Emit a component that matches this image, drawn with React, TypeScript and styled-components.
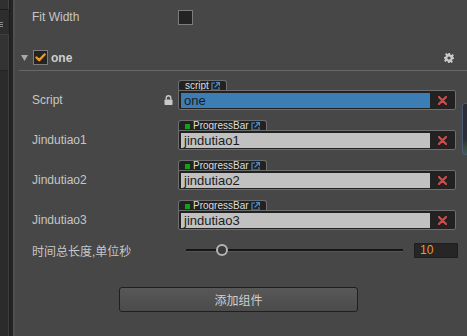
import styled, { createGlobalStyle } from "styled-components";

const GlobalStyle = createGlobalStyle`
  html, body {
    margin: 0;
    padding: 0;
    background: #474747;
  }
  body {
    font-family: "Liberation Sans", Arial, "Noto Sans CJK SC", sans-serif;
    -webkit-font-smoothing: antialiased;
  }
  #root {
    height: 336px;
  }
`;

type Ref = { label: string; type: string; value: string; locked?: boolean; script?: boolean };

const refs: Ref[] = [
  { label: "Script", type: "script", value: "one", locked: true, script: true },
  { label: "Jindutiao1", type: "ProgressBar", value: "jindutiao1" },
  { label: "Jindutiao2", type: "ProgressBar", value: "jindutiao2" },
  { label: "Jindutiao3", type: "ProgressBar", value: "jindutiao3" },
];

const CheckMark = () => (
  <svg width="11" height="9" viewBox="0 0 11 9">
    <path d="M1.5 4.5 L4.2 7.2 L9.5 1.5" fill="none" stroke="#f39a1e" strokeWidth="2.4" strokeLinecap="round" strokeLinejoin="round" />
  </svg>
);

const FoldArrow = () => (
  <svg width="7" height="6" viewBox="0 0 7 6">
    <path d="M0 0 H7 L3.5 6 Z" fill="#a9a9a9" />
  </svg>
);

const Gear = () => (
  <svg width="10" height="10" viewBox="0 0 10 10">
    <path
      fill="#c9c9c9"
      fillRule="evenodd"
      d="M4 0h2l.3 1.5 1.1.5 1.3-.9 1.2 1.2-.9 1.3.5 1.1L10 4v2l-1.5.3-.5 1.1.9 1.3-1.2 1.2-1.3-.9-1.1.5L6 10H4l-.3-1.5-1.1-.5-1.3.9-1.2-1.2.9-1.3-.5-1.1L0 6V4l1.5-.3.5-1.1-.9-1.3 1.2-1.2 1.3.9 1.1-.5zM5 3.4a1.6 1.6 0 1 0 0 3.2 1.6 1.6 0 1 0 0-3.2z"
    />
  </svg>
);

const Lock = () => (
  <svg width="9" height="10" viewBox="0 0 9 10">
    <path d="M2.2 4.5V3a2.3 2.3 0 0 1 4.6 0v1.5" fill="none" stroke="#c9c9c9" strokeWidth="1.4" />
    <rect x="0.5" y="4.5" width="8" height="5.5" rx="0.8" fill="#c9c9c9" />
  </svg>
);

const LinkIcon = () => (
  <svg width="9" height="9" viewBox="0 0 9 9">
    <path d="M4 1H1v7h7V5" fill="none" stroke="#4a8fd4" strokeWidth="1.1" />
    <path d="M5 0.6h3.4V4" fill="none" stroke="#4a8fd4" strokeWidth="1.1" />
    <path d="M8.2 0.8 3.6 5.4" stroke="#4a8fd4" strokeWidth="1.3" />
  </svg>
);

const RemoveIcon = () => (
  <svg width="9" height="9" viewBox="0 0 9 9">
    <path d="M1 1 8 8M8 1 1 8" stroke="#d5494b" strokeWidth="2.3" strokeLinecap="round" />
  </svg>
);

export default function App() {
  return (
    <>
      <GlobalStyle />
      <Page>
        <Dock>
          <DockPanel>
            <DockTopBox />
            <DockGlyph />
            <DockList>
              <DockHeader />
            </DockList>
          </DockPanel>
          <DockGutter />
          <DockEdge />
        </Dock>

        <Inspector>
          <PropRow $height={34}>
            <PropLabel>Fit Width</PropLabel>
            <CheckBox />
          </PropRow>

          <CompHeader>
            <FoldArrow />
            <CheckBox $small>
              <CheckMark />
            </CheckBox>
            <CompName>one</CompName>
            <GearSlot>
              <Gear />
            </GearSlot>
          </CompHeader>

          <RefList>
            {refs.map((r) => (
              <RefRow key={r.label}>
                <RefLabel>
                  {r.label}
                  {r.locked && (
                    <LockSlot>
                      <Lock />
                    </LockSlot>
                  )}
                </RefLabel>
                <RefField>
                  <TypeTab>
                    {!r.script && <TypeDot />}
                    {r.type}
                    <LinkIcon />
                  </TypeTab>
                  <FieldBox>
                    <FieldValue $script={r.script}>{r.value}</FieldValue>
                    <RemoveSlot>
                      <RemoveIcon />
                    </RemoveSlot>
                  </FieldBox>
                </RefField>
              </RefRow>
            ))}
          </RefList>

          <SliderRow>
            <PropLabel>时间总长度,单位秒</PropLabel>
            <SliderTrack>
              <SliderThumb style={{ left: `${(10 / 60) * 100}%` }} />
            </SliderTrack>
            <NumberBox>10</NumberBox>
          </SliderRow>

          <AddButton>添加组件</AddButton>

          <FloatEdge />
        </Inspector>
      </Page>
    </>
  );
}

const Page = styled.div`
display: flex;
width: 467px;
height: 336px;
overflow: hidden;
background: #474747;
`

const Dock = styled.div`
display: flex;
flex: none;
width: 15px;
height: 100%;
`
const DockPanel = styled.div`
display: flex;
flex-direction: column;
width: 9px;
background: #2d2d2d;
border-right: 1px solid #1d1d1d;
`
const DockTopBox = styled.div`
height: 9px;
background: #303030;
border-bottom: 1px solid #1b1b1b;
border-right: 1px solid #444;
`
const DockGlyph = styled.div`
width: 3px;
height: 5px;
margin-top: 12px;
background: repeating-linear-gradient(#8a8a8a 0 1px, transparent 1px 2px);
`
const DockList = styled.div`
flex: 1;
margin-top: 7px;
background: #2b2b2b;
border-top: 1px solid #3e3e3e;
border-right: 1px solid #3f3f3f;
`
const DockHeader = styled.div`
height: 35px;
background: #333;
border-bottom: 1px solid #242424;
`
const DockGutter = styled.div`
width: 3px;
background: #242424;
`
const DockEdge = styled.div`
width: 2px;
background: #505050;
`

const Inspector = styled.div`
position: relative;
display: flex;
flex-direction: column;
flex: 1;
min-width: 0;
`

const PropRow = styled.div<{ $height: number }>`
display: flex;
align-items: center;
height: ${(p) => p.$height}px;
padding-left: 17px;
`
const PropLabel = styled.div`
width: 146px;
flex: none;
font-size: 12px;
color: #c6c6c6;
white-space: nowrap;
`

const CheckBox = styled.div<{ $small?: boolean }>`
display: flex;
align-items: center;
justify-content: center;
box-sizing: border-box;
width: 15px;
height: 15px;
border: 1px solid #7c7c7c;
background: #232323;
margin: ${(p) => (p.$small ? "0 3px 0 5px" : "0")};
`

const CompHeader = styled.div`
display: flex;
align-items: center;
height: 25px;
margin: 11px 0 0 4px;
padding-left: 2px;
border-bottom: 1px solid #676767;
`
const CompName = styled.span`
font-size: 12px;
font-weight: bold;
color: #cfcfcf;
`
const GearSlot = styled.span`
display: flex;
margin-left: auto;
margin-right: 13px;
`

const RefList = styled.div`
display: flex;
flex-direction: column;
margin-top: 9px;
`
const RefRow = styled.div`
display: flex;
height: 40px;
padding-left: 17px;
`
const RefLabel = styled.div`
display: flex;
align-items: center;
justify-content: space-between;
box-sizing: border-box;
width: 146px;
height: 20px;
margin-top: 10px;
padding-right: 5px;
font-size: 12px;
color: #c6c6c6;
`
const LockSlot = styled.span`
display: flex;
`
const RefField = styled.div`
display: flex;
flex-direction: column;
align-items: flex-start;
width: 278px;
`
const TypeTab = styled.div`
display: flex;
align-items: center;
gap: 2px;
box-sizing: border-box;
height: 11px;
margin-bottom: -1px;
padding: 0 6px 0 6px;
border: 1px solid #6e6e6e;
border-bottom: none;
border-radius: 3px 3px 0 0;
background: #222;
font-size: 10px;
line-height: 10px;
color: #dedede;
`
const TypeDot = styled.span`
width: 5px;
height: 5px;
margin-right: 1px;
background: #0fa312;
`
const FieldBox = styled.div`
display: flex;
align-items: center;
box-sizing: border-box;
width: 278px;
height: 20px;
padding: 2px 0 1px 2px;
border: 1px solid #6e6e6e;
border-radius: 2px;
background: #222;
`
const FieldValue = styled.div<{ $script?: boolean }>`
width: 249px;
height: 15px;
padding-left: 3px;
box-sizing: border-box;
background: ${(p) => (p.$script ? "#3d7db5" : "#c1c1c1")};
font-size: 13px;
line-height: 15px;
color: #1c1c1c;
`
const RemoveSlot = styled.span`
display: flex;
justify-content: center;
flex: 1;
`

const SliderRow = styled.div`
display: flex;
align-items: center;
height: 21px;
padding-left: 17px;
`
const SliderTrack = styled.div`
position: relative;
width: 217px;
height: 2px;
margin-left: 8px;
background: #161616;
border-bottom: 1px solid #555;
`
const SliderThumb = styled.div`
position: absolute;
top: 50%;
box-sizing: border-box;
width: 12px;
height: 12px;
margin: -6px 0 0 -6px;
border: 2px solid #b4b4b4;
border-radius: 50%;
background: #3a3a3a;
`
const NumberBox = styled.div`
box-sizing: border-box;
width: 44px;
height: 15px;
margin-left: 11px;
padding-left: 5px;
background: #262626;
border: 1px solid #1e1e1e;
font-size: 12px;
line-height: 13px;
color: #f0962a;
`

const AddButton = styled.button`
width: 239px;
height: 25px;
margin: 26px 0 0 104px;
padding: 0;
border: 1px solid #1f1f1f;
border-radius: 3px;
background: linear-gradient(#585858, #4b4b4b);
font-family: "Liberation Sans", Arial, "Noto Sans CJK SC", sans-serif;
font-size: 12px;
color: #cfcfcf;
`

const FloatEdge = styled.div`
position: absolute;
left: 447px;
top: 103px;
width: 10px;
height: 52px;
box-sizing: border-box;
border: 1px solid #4d5972;
border-radius: 3px 0 0 3px;
background: linear-gradient(#2b2e38 70%, #3a4a3a 85%, #3c5a5a);
`
